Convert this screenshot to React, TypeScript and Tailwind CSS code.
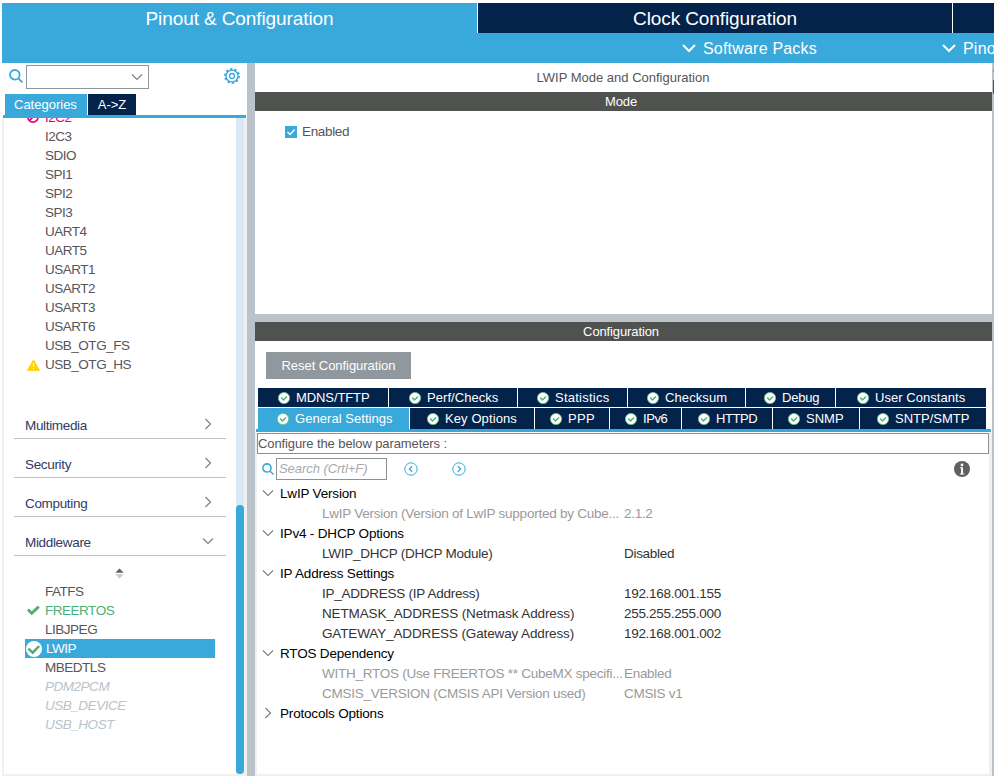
import { ReactNode } from "react";
import clsx from "clsx";

type Status = "ok" | "okSelected" | "warn" | "off" | "disabled";

interface Peripheral {
  name: string;
  status?: Status;
}

const CONNECTIVITY: Peripheral[] = [
  { name: "I2C2", status: "off" },
  { name: "I2C3" },
  { name: "SDIO" },
  { name: "SPI1" },
  { name: "SPI2" },
  { name: "SPI3" },
  { name: "UART4" },
  { name: "UART5" },
  { name: "USART1" },
  { name: "USART2" },
  { name: "USART3" },
  { name: "USART6" },
  { name: "USB_OTG_FS" },
  { name: "USB_OTG_HS", status: "warn" },
];

const MIDDLEWARE: Peripheral[] = [
  { name: "FATFS" },
  { name: "FREERTOS", status: "ok" },
  { name: "LIBJPEG" },
  { name: "LWIP", status: "okSelected" },
  { name: "MBEDTLS" },
  { name: "PDM2PCM", status: "disabled" },
  { name: "USB_DEVICE", status: "disabled" },
  { name: "USB_HOST", status: "disabled" },
];

const SECTIONS = ["Multimedia", "Security", "Computing", "Middleware"];

interface Tab {
  label: string;
  box: string;
  active?: boolean;
}

const TOP_TABS: Tab[] = [
  { label: "MDNS/TFTP", box: "w-[130px] pl-5 tracking-[-0.1px]" },
  { label: "Perf/Checks", box: "w-[128px] pl-5 tracking-[0.05px]" },
  { label: "Statistics", box: "w-[109px] pl-[19px] tracking-[0.25px]" },
  { label: "Checksum", box: "w-[117px] pl-[19px] tracking-[0.1px]" },
  { label: "Debug", box: "w-[89px] pl-[18px] tracking-[-0.2px]" },
  { label: "User Constants", box: "w-[150px] pl-[21px] tracking-[0.05px]" },
];

const BOTTOM_TABS: Tab[] = [
  { label: "General Settings", box: "w-[151px] pl-[19px] tracking-[0.05px]", active: true },
  { label: "Key Options", box: "w-[124px] pl-[17px] tracking-[0.1px]" },
  { label: "PPP", box: "w-[74px] pl-[15px] tracking-[0.3px]" },
  { label: "IPv6", box: "w-[71px] pl-[15px] tracking-[-0.4px]" },
  { label: "HTTPD", box: "w-[90px] pl-[16px] tracking-[-0.4px]" },
  { label: "SNMP", box: "w-[86px] pl-[15px] tracking-[0px]" },
  { label: "SNTP/SMTP", box: "w-[126px] pl-[17px] tracking-[0px]" },
];

interface Param {
  name: string;
  value: string;
  readOnly?: boolean;
  wide?: boolean;
}

const GROUPS: { title: string; params: Param[] }[] = [
  {
    title: "LwIP Version",
    params: [{ name: "LwIP Version (Version of LwIP supported by Cube...", value: "2.1.2", readOnly: true }],
  },
  {
    title: "IPv4 - DHCP Options",
    params: [{ name: "LWIP_DHCP (DHCP Module)", value: "Disabled" }],
  },
  {
    title: "IP Address Settings",
    params: [
      { name: "IP_ADDRESS (IP Address)", value: "192.168.001.155" },
      { name: "NETMASK_ADDRESS (Netmask Address)", value: "255.255.255.000", wide: true },
      { name: "GATEWAY_ADDRESS (Gateway Address)", value: "192.168.001.002", wide: true },
    ],
  },
  {
    title: "RTOS Dependency",
    params: [
      { name: "WITH_RTOS (Use FREERTOS ** CubeMX specifi...", value: "Enabled", readOnly: true },
      { name: "CMSIS_VERSION (CMSIS API Version used)", value: "CMSIS v1", readOnly: true },
    ],
  },
  { title: "Protocols Options", params: [] },
];

function Chevron({ open, className }: { open?: boolean; className?: string }) {
  return (
    <svg className={clsx("w-3 h-3 shrink-0", className)} viewBox="0 0 12 12" fill="none" stroke="currentColor" strokeWidth="1.2">
      <path d={open ? "M1 3.5 L6 8.5 L11 3.5" : "M3.5 1 L8.5 6 L3.5 11"} />
    </svg>
  );
}

function SearchIcon({ className }: { className: string }) {
  return (
    <svg className={clsx("shrink-0 text-[#39a9dc]", className)} viewBox="0 0 14 14" fill="none" stroke="currentColor" strokeWidth="1.8">
      <circle cx="5.8" cy="5.8" r="4.8" />
      <path d="M9.3 9.3 L13.4 13.4" />
    </svg>
  );
}

function GearIcon() {
  return (
    <svg className="w-4 h-4 text-[#39a9dc]" viewBox="0 0 16 16" fill="none" stroke="currentColor">
      <circle cx="8" cy="8" r="7.1" strokeWidth="1.6" strokeDasharray="2.4 2.061" />
      <circle cx="8" cy="8" r="5.9" strokeWidth="1.3" />
      <circle cx="8" cy="8" r="2.5" strokeWidth="1.3" />
    </svg>
  );
}

function CheckBadge() {
  return (
    <svg className="w-3 h-3 shrink-0" viewBox="0 0 12 12" fill="none">
      <circle cx="6" cy="6" r="5.6" fill="#fff" stroke="#6fc28f" strokeWidth="0.8" />
      <path d="M3.2 5.6 L5.5 7.9 L9 4.4" stroke="#4caf73" strokeWidth="1.4" />
    </svg>
  );
}

function StatusIcon({ status }: { status?: Status }) {
  switch (status) {
    case "ok":
      return (
        <svg className="w-[13px] h-[11px]" viewBox="0 0 13 11" fill="none" stroke="#4caf73" strokeWidth="2.8">
          <path d="M1 4.6 L4.7 8.2 L11.8 1.6" />
        </svg>
      );
    case "okSelected":
      return (
        <svg className="w-4 h-4" viewBox="0 0 16 16" fill="none">
          <circle cx="8" cy="8" r="8" fill="#fff" />
          <path d="M2.4 7.6 L6.7 11.7 L13.2 5" stroke="#4caf73" strokeWidth="2.5" />
        </svg>
      );
    case "warn":
      return (
        <svg className="w-[13px] h-3" viewBox="0 0 13 12">
          <path d="M6.5 0.8 L12.6 11.4 H0.4 Z" fill="#ffd200" stroke="#ffd200" strokeWidth="0.8" strokeLinejoin="round" />
          <path d="M6.5 4 V8 M6.5 9 V10.2" stroke="#fff" strokeWidth="1.1" />
        </svg>
      );
    case "off":
      return (
        <svg className="w-3 h-3 -mt-[2px]" viewBox="0 0 12 12" fill="none" stroke="#e6007e" strokeWidth="1.7">
          <circle cx="6" cy="6" r="5.1" />
          <path d="M2.4 9.6 L9.6 2.4" />
        </svg>
      );
    default:
      return null;
  }
}

function PeripheralRow({ name, status }: Peripheral) {
  const selected = status === "okSelected";
  return (
    <div
      className={clsx(
        "ml-[21px] w-[190px] h-[19px] flex items-center leading-[19px] text-[13.5px] tracking-[-0.48px]",
        selected && "bg-[#39a9dc] text-white",
        status === "ok" && "text-[#4caf73]",
        status === "off" && "text-[#e6007e]",
        status === "disabled" && "text-[#b9c3c9] italic",
        (!status || status === "warn") && "text-[#55555a]"
      )}
    >
      <span className={clsx("w-5 shrink-0 flex", selected ? "pl-px" : "pl-[2px]")}>
        <StatusIcon status={status} />
      </span>
      <span className={clsx(selected && "pl-px")}>{name}</span>
    </div>
  );
}

function Sidebar() {
  return (
    <aside className="w-[245px] shrink-0 flex flex-col">
      <div className="h-[31px] shrink-0 flex items-start">
        <SearchIcon className="w-[14px] h-[14px] ml-[7px] mt-[6px]" />
        <div className="ml-[3px] mt-[2px] w-[123px] h-6 border border-[#8f979d] flex items-center justify-end pr-[5px]">
          <Chevron open className="text-[#808083]" />
        </div>
        <span className="ml-[75px] mt-[5px]">
          <GearIcon />
        </span>
      </div>
      <div className="h-[21px] shrink-0 flex gap-px pl-[3px] text-white leading-[21px]">
        <div className="w-[82px] bg-[#39a9dc] pl-[9px]">Categories</div>
        <div className="w-12 bg-[#03234b] text-center">A-&gt;Z</div>
      </div>
      <div className="h-[3px] shrink-0 mx-px bg-[#39a9dc]" />
      <div className="flex-1 min-h-0 flex border-l-2 border-r-3 border-b-2 border-[#f0f0f0]">
        <div className="flex-1 min-w-0 overflow-hidden">
          <div className="-mt-[10px]">
            {CONNECTIVITY.map((p) => (
              <PeripheralRow key={p.name} {...p} />
            ))}
          </div>
          <div className="mt-[26px] ml-[10px] w-[212px]">
            {SECTIONS.map((s) => (
              <div
                key={s}
                className="h-[39px] border-b border-[#b9c3c9] flex items-center justify-between pl-[11px] pr-3 pt-[15px] text-[#2f3a66] text-[13.5px] tracking-[-0.33px]"
              >
                <span>{s}</span>
                <Chevron open={s === "Middleware"} className="text-[#808083] -mt-[5px]" />
              </div>
            ))}
          </div>
          <div className="h-[26px] pt-[12px] pl-[111px]">
            <svg className="w-[9px] h-[11px]" viewBox="0 0 9 11">
              <path d="M4.5 0.5 L8.7 4.7 H0.3 Z" fill="#606065" />
              <path d="M4.5 10.5 L8.7 6.3 H0.3 Z" fill="#c8c8c8" />
            </svg>
          </div>
          {MIDDLEWARE.map((p) => (
            <PeripheralRow key={p.name} {...p} />
          ))}
        </div>
        <div className="w-2 bg-[#d9e9f6] flex flex-col justify-end">
          <div className="h-[269px] rounded-full bg-[#39a9dc]" />
        </div>
      </div>
    </aside>
  );
}

function SectionBar({ children }: { children: ReactNode }) {
  return (
    <div className="h-[19px] shrink-0 bg-[#505250] text-white text-center leading-[19px] pr-[5px] tracking-[-0.12px]">
      {children}
    </div>
  );
}

function TabRow({ tabs, className }: { tabs: Tab[]; className: string }) {
  return (
    <div className={clsx("flex gap-px ml-[3px] text-white", className)}>
      {tabs.map((tab) => (
        <div
          key={tab.label}
          className={clsx("flex items-center gap-[6px] whitespace-nowrap", tab.box, tab.active ? "bg-[#39a9dc]" : "bg-[#03234b]")}
        >
          <CheckBadge />
          {tab.label}
        </div>
      ))}
    </div>
  );
}

function RoundArrow({ left }: { left?: boolean }) {
  return (
    <svg className="w-[14px] h-[14px]" viewBox="0 0 14 14" fill="none" stroke="#39a9dc">
      <circle cx="7" cy="7" r="6.2" />
      <path d={left ? "M8.2 4.2 L5.4 7 L8.2 9.8" : "M5.8 4.2 L8.6 7 L5.8 9.8"} strokeWidth="1.3" />
    </svg>
  );
}

function ParamTree() {
  return (
    <div className="pl-[5px] pt-px leading-5 text-[13.5px]">
      {GROUPS.map((g) => (
        <div key={g.title}>
          <div className="h-5 flex items-center text-black tracking-[-0.18px]">
            <Chevron open={g.params.length > 0} className="text-[#808083] mr-[6px] -mt-[2px]" />
            {g.title}
          </div>
          {g.params.map((p) => (
            <div
              key={p.name}
              className={clsx("h-5 flex pl-[60px] whitespace-nowrap", p.readOnly ? "text-[#9a9a9a]" : "text-[#333333]")}
            >
              <span className={clsx("w-[302px] shrink-0", p.wide ? "tracking-[-0.13px]" : "tracking-[-0.25px]")}>
                {p.name}
              </span>
              <span className="tracking-[-0.3px]">{p.value}</span>
            </div>
          ))}
        </div>
      ))}
    </div>
  );
}

function ConfigPanel() {
  return (
    <main className="w-[737px] shrink-0 flex flex-col">
      <div className="h-[29px] shrink-0 text-center text-[#55555a] leading-[29px] pr-px">LWIP Mode and Configuration</div>
      <SectionBar>Mode</SectionBar>
      <div className="h-[203px] shrink-0 pl-[30px] pt-[12px]">
        <label className="flex items-center gap-[5px] leading-[18px] text-[#55555a] text-[13.5px] tracking-[-0.35px]">
          <svg className="w-3 h-3" viewBox="0 0 12 12">
            <rect width="12" height="12" fill="#39a9dc" />
            <path d="M2.5 6 L5 8.5 L9.7 3.5" stroke="#fff" strokeWidth="1.4" fill="none" />
          </svg>
          Enabled
        </label>
      </div>
      <div className="h-2 shrink-0 bg-[#b9c3c9]" />
      <SectionBar>Configuration</SectionBar>
      <button className="ml-[11px] mt-[11px] w-[145px] h-[27px] shrink-0 bg-[#90989e] text-white tracking-[-0.05px]">
        Reset Configuration
      </button>
      <TabRow tabs={TOP_TABS} className="mt-[9px] h-[19px]" />
      <TabRow tabs={BOTTOM_TABS} className="mt-px h-[21px]" />
      <div className="h-[3px] shrink-0 mx-px bg-[#39a9dc]" />
      <div className="flex-1 min-h-0 border-l-2 border-r-3 border-b-2 border-[#f0f0f0] pt-px">
        <div className="h-[21px] border border-[#8f8f96] text-[#55555a] leading-[19px] tracking-[-0.1px]">
          Configure the below parameters :
        </div>
        <div className="h-[29px] flex items-center pl-[5px] pr-[19px]">
          <SearchIcon className="w-3 h-3" />
          <div className="ml-[2px] w-[111px] h-[22px] border border-[#8f8f96] pl-[2px] italic text-[#a9a9a9] leading-5 tracking-[-0.05px]">
            Search (Crtl+F)
          </div>
          <div className="ml-[17px] flex gap-[34px]">
            <RoundArrow left />
            <RoundArrow />
          </div>
          <svg className="w-4 h-4 ml-auto" viewBox="0 0 16 16">
            <circle cx="8" cy="8" r="8" fill="#606060" />
            <circle cx="8" cy="3.9" r="1.3" fill="#fff" />
            <path d="M6 6.2 H9 V12.4 H10.3 V13.4 H5.9 V12.4 H7.1 V7.2 H6 Z" fill="#fff" />
          </svg>
        </div>
        <ParamTree />
      </div>
    </main>
  );
}

function MenuItem({ label, className }: { label: string; className: string }) {
  return (
    <div className={clsx("flex items-center gap-[7px] shrink-0 tracking-[0.2px]", className)}>
      <svg className="w-[14px] h-[10px]" viewBox="0 0 14 10" fill="none" stroke="#fff" strokeWidth="2">
        <path d="M1 2 L7 8 L13 2" />
      </svg>
      <span className="pt-px">{label}</span>
    </div>
  );
}

export default function App() {
  return (
    <div className="w-[994px] h-[776px] overflow-hidden bg-white flex flex-col pt-[3px] pl-[2px] font-['Liberation_Sans',Arial,sans-serif] text-[13px]">
      <nav className="h-[30px] shrink-0 flex gap-px text-white text-[19px] tracking-[-0.1px] leading-[31px] text-center">
        <div className="w-[475px] shrink-0 bg-[#39a9dc]">Pinout &amp; Configuration</div>
        <div className="w-[474px] shrink-0 bg-[#03234b]">Clock Configuration</div>
        <div className="flex-1 bg-[#03234b]" />
      </nav>
      <div className="h-[30px] shrink-0 bg-[#39a9dc] flex overflow-hidden whitespace-nowrap text-white text-base">
        <MenuItem label="Software Packs" className="ml-[680px] w-[260px]" />
        <MenuItem label="Pinout" className="" />
      </div>
      <div className="flex-1 min-h-0 flex">
        <Sidebar />
        <div className="w-2 shrink-0 bg-[#b9c3c9]" />
        <ConfigPanel />
        {/* right splitter with the edge of the next panel's controls */}
        <div className="flex-1 bg-[#b9c3c9] flex flex-col items-end">
          <div className="mt-[7px] w-px h-[2px] bg-[#8f979d]" />
          <div className="mt-2 w-px h-[14px] bg-[#505250]" />
        </div>
      </div>
    </div>
  );
}
